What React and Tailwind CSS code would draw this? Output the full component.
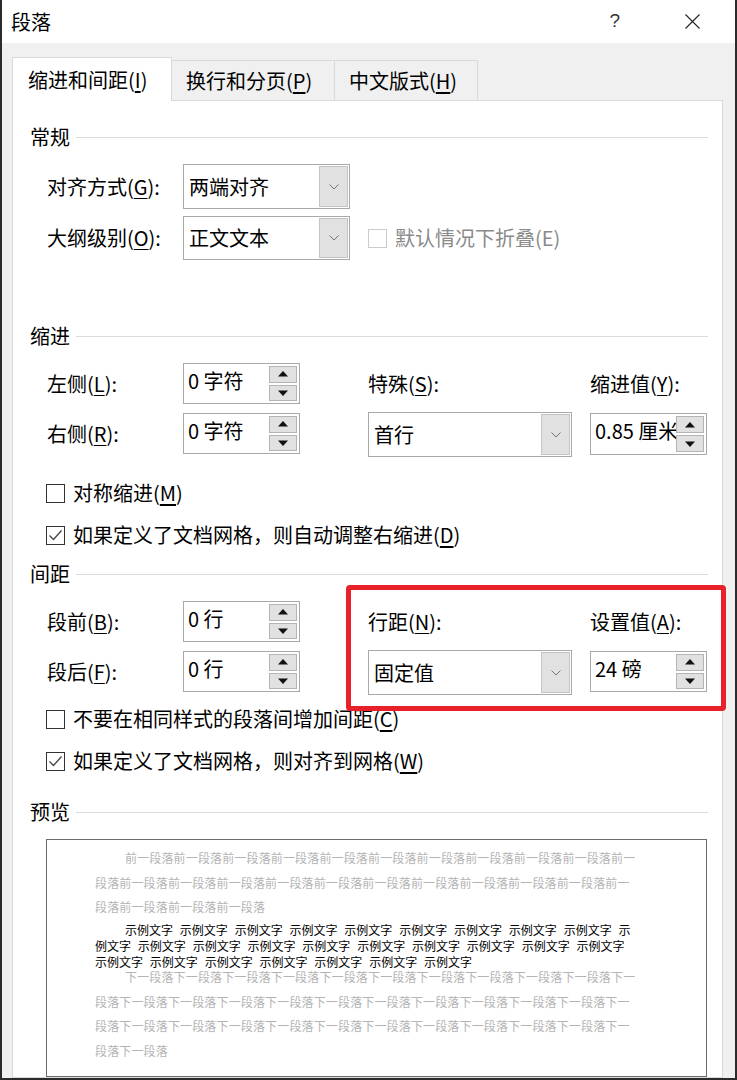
function Acc({ text, k }) {
  return (
    <>
      {text}(<u className="underline-offset-[3px] decoration-1">{k}</u>):
    </>
  );
}

function Heading({ children, className = "" }) {
  return (
    <div className={`flex items-center h-[28px] ${className}`}>
      <span className="text-[20px] leading-[28px]">{children}</span>
      <div className="flex-1 ml-[6px] h-px bg-[#dcdcdc]" />
    </div>
  );
}

function Chevron() {
  return (
    <svg width="10" height="6" viewBox="0 0 10 6">
      <polyline points="0.5,0.5 5,5 9.5,0.5" fill="none" stroke="#767676" strokeWidth="1" />
    </svg>
  );
}

function Select({ value, className = "" }) {
  return (
    <div className={`flex items-stretch bg-white border border-[#a9a9a9] p-px ${className}`}>
      <div className="flex-1 flex items-center pl-[4px] text-[20px] whitespace-nowrap">{value}</div>
      <div className="w-[29px] bg-[#e1e1e1] border border-[#c4c4c4] flex items-center justify-center">
        <Chevron />
      </div>
    </div>
  );
}

function Spin({ value, className = "" }) {
  return (
    <div className={`flex items-stretch bg-white border border-[#a9a9a9] p-[2px] ${className}`}>
      <div className="flex-1 overflow-hidden whitespace-nowrap pl-[2px] text-[20px] leading-[30px]">{value}</div>
      <div className="w-[28px] flex flex-col gap-[2px]">
        <div className="flex-1 bg-[#e1e1e1] border border-[#b4b4b4] flex items-center justify-center">
          <svg width="10" height="6" viewBox="0 0 10 6">
            <polygon points="0,5.5 5,0 10,5.5" fill="#111" />
          </svg>
        </div>
        <div className="flex-1 bg-[#e1e1e1] border border-[#b4b4b4] flex items-center justify-center">
          <svg width="10" height="6" viewBox="0 0 10 6">
            <polygon points="0,0.5 10,0.5 5,6" fill="#111" />
          </svg>
        </div>
      </div>
    </div>
  );
}

function Check({ checked, disabled, children, className = "" }) {
  return (
    <div className={`flex items-center h-[30px] ${className}`}>
      <div
        className={`size-[19px] bg-white border flex items-center justify-center ${
          disabled ? "border-[#cccccc]" : "border-[#333333]"
        }`}
      >
        {checked && (
          <svg width="15" height="13" viewBox="0 0 15 13">
            <polyline points="1.5,6.5 5.5,10.5 13.5,1.5" fill="none" stroke="#444" strokeWidth="1.3" />
          </svg>
        )}
      </div>
      <span className={`ml-[8px] text-[20px] whitespace-nowrap ${disabled ? "text-[#8a8a8a]" : "text-black"}`}>
        {children}
      </span>
    </div>
  );
}

function LabelSpinRow({ label, value }) {
  return (
    <div className="flex items-center h-[41px]">
      <div className="w-[136px] text-[20px]">{label}</div>
      <Spin value={value} className="w-[117px] h-[41px]" />
    </div>
  );
}

const grayBefore = ["前一段落".repeat(10) + "前一", "段落前一".repeat(11), "段落前一段落前一段落前一段落"];
const grayAfter = [
  "下一段落".repeat(10) + "下一",
  "段落下一".repeat(11),
  "段落下一".repeat(11),
  "段落下一段落",
];
const sample = [
  Array(9).fill("示例文字").join(" ") + " 示",
  "例文字 " + Array(9).fill("示例文字").join(" "),
  Array(7).fill("示例文字").join(" "),
];

function Preview() {
  return (
    <div className="ml-[16px] w-[661px] flex-1 bg-white border border-[#6b6b6b] pl-[48px] pt-[7px] font-['Liberation_Sans','Noto_Sans_CJK_SC',sans-serif] text-[12px] [word-spacing:3.5px]">
      {grayBefore.map((t, i) => (
        <div
          key={i}
          className={`h-[24.5px] leading-[24.5px] text-[#b4b4b4] whitespace-pre tracking-[0.15px] ${i === 0 ? "pl-[30px]" : ""}`}
        >
          {t}
        </div>
      ))}
      <div className="mt-[2.5px]">
        {sample.map((t, i) => (
          <div key={i} className={`h-[16px] leading-[16px] text-black whitespace-pre ${i === 0 ? "pl-[30px]" : ""}`}>
            {t}
          </div>
        ))}
      </div>
      <div className="mt-[-5px]">
        {grayAfter.map((t, i) => (
          <div
            key={i}
            className={`h-[24.5px] leading-[24.5px] text-[#b4b4b4] whitespace-pre tracking-[0.15px] ${i === 0 ? "pl-[30px]" : ""}`}
          >
            {t}
          </div>
        ))}
      </div>
    </div>
  );
}

export default function App() {
  return (
    <div className="w-[737px] h-[1080px] overflow-hidden flex flex-col border-l-2 border-r-2 border-b-2 border-[#2b2b2b] text-black font-['Noto_Sans_CJK_SC',sans-serif]">
      {/* title bar */}
      <div className="h-[43px] bg-white flex items-center pl-[9px] pr-[35px] shrink-0">
        <span className="text-[20px] leading-none">段落</span>
        <span className="ml-auto text-[19px] text-[#333] font-['Liberation_Sans',sans-serif]">?</span>
        <svg className="ml-[65px]" width="15" height="15" viewBox="0 0 15 15">
          <path d="M0.5 0.5 L14.5 14.5 M14.5 0.5 L0.5 14.5" stroke="#222" strokeWidth="1.1" />
        </svg>
      </div>

      <div className="flex-1 flex flex-col bg-[#f0f0f0] pl-[10px] pr-[12px] pt-[14px] min-h-0">
        {/* tabs */}
        <div className="flex items-end h-[44px] mb-[-1px] relative z-10 text-[20px]">
          <div className="w-[160px] h-[44px] bg-white border border-b-0 border-[#d9d9d9] flex items-center pl-[15px]">
            缩进和间距(<u className="underline-offset-[3px]">I</u>)
          </div>
          <div className="w-[163px] h-[41px] border border-l-0 border-[#d9d9d9] flex items-center pl-[14px]">
            换行和分页(<u className="underline-offset-[3px]">P</u>)
          </div>
          <div className="w-[143px] h-[41px] border border-l-0 border-[#d9d9d9] flex items-center pl-[14px]">
            中文版式(<u className="underline-offset-[3px]">H</u>)
          </div>
        </div>

        {/* panel */}
        <div className="flex-1 bg-white border border-[#d9d9d9] flex flex-col pl-[17px] pr-[14px] min-h-0">
          <Heading className="mt-[22px]">常规</Heading>
          <div className="mt-[13px] pl-[17px]">
            <div className="flex items-center h-[45px]">
              <div className="w-[136px] text-[20px]">
                <Acc text="对齐方式" k="G" />
              </div>
              <Select value="两端对齐" className="w-[167px] h-[45px]" />
            </div>
            <div className="flex items-center h-[44px] mt-[7px]">
              <div className="w-[136px] text-[20px]">
                <Acc text="大纲级别" k="O" />
              </div>
              <Select value="正文文本" className="w-[167px] h-[44px]" />
              <Check disabled className="ml-[18px]">
                默认情况下折叠(E)
              </Check>
            </div>
          </div>

          <Heading className="mt-[62px]">缩进</Heading>
          <div className="mt-[13px] pl-[17px] flex">
            <div className="flex flex-col gap-[9px]">
              <LabelSpinRow label={<Acc text="左侧" k="L" />} value="0 字符" />
              <LabelSpinRow label={<Acc text="右侧" k="R" />} value="0 字符" />
            </div>
            <div className="ml-[68px] w-[204px]">
              <div className="h-[41px] flex items-center text-[20px]">
                <Acc text="特殊" k="S" />
              </div>
              <Select value="首行" className="mt-[8px] h-[45px]" />
            </div>
            <div className="ml-[18px] w-[117px]">
              <div className="h-[41px] flex items-center text-[20px] whitespace-nowrap">
                <Acc text="缩进值" k="Y" />
              </div>
              <Spin value="0.85 厘米" className="mt-[9px] h-[42px]" />
            </div>
          </div>

          <Check className="mt-[21px] ml-[16px]">
            对称缩进(<u className="underline-offset-[3px]">M</u>)
          </Check>
          <Check checked className="mt-[12px] ml-[16px]">
            如果定义了文档网格，则自动调整右缩进(<u className="underline-offset-[3px]">D</u>)
          </Check>

          <Heading className="mt-[10px]">间距</Heading>
          <div className="mt-[13px] pl-[17px] flex relative">
            <div className="flex flex-col gap-[9px]">
              <LabelSpinRow label={<Acc text="段前" k="B" />} value="0 行" />
              <LabelSpinRow label={<Acc text="段后" k="F" />} value="0 行" />
            </div>
            <div className="ml-[68px] w-[204px]">
              <div className="h-[41px] flex items-center text-[20px]">
                <Acc text="行距" k="N" />
              </div>
              <Select value="固定值" className="mt-[8px] h-[45px]" />
            </div>
            <div className="ml-[18px] w-[117px]">
              <div className="h-[41px] flex items-center text-[20px] whitespace-nowrap">
                <Acc text="设置值" k="A" />
              </div>
              <Spin value="24 磅" className="mt-[9px] h-[41px]" />
            </div>
            {/* highlight annotation */}
            <div className="absolute left-[316px] top-[-16px] w-[380px] h-[126px] border-[5px] border-[#e8202a] rounded-[4px] pointer-events-none" />
          </div>

          <Check className="mt-[9px] ml-[16px]">
            不要在相同样式的段落间增加间距(<u className="underline-offset-[3px]">C</u>)
          </Check>
          <Check checked className="mt-[12px] ml-[16px]">
            如果定义了文档网格，则对齐到网格(<u className="underline-offset-[3px]">W</u>)
          </Check>

          <Heading className="mt-[22px]">预览</Heading>
          <div className="mt-[13px] flex-1 flex flex-col min-h-0">
            <Preview />
          </div>
        </div>
      </div>
    </div>
  );
}
